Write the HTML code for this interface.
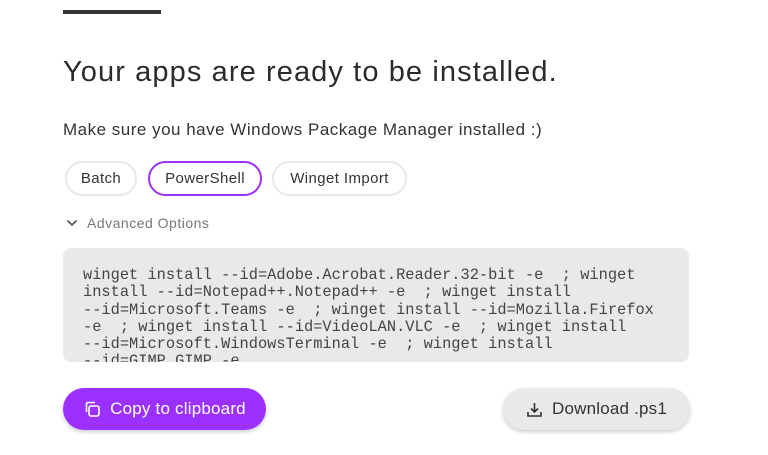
<!DOCTYPE html>
<html><head><meta charset="utf-8"><style>
*{margin:0;padding:0;box-sizing:border-box}
body{width:768px;height:455px;background:#fff;font-family:"Liberation Sans",sans-serif;color:#333;position:relative;overflow:hidden}
.bar{position:absolute;left:63px;top:10px;width:98px;height:4px;background:#333}
h1{position:absolute;left:63px;top:56px;font-size:29px;font-weight:normal;white-space:nowrap;color:#2b2b2b;letter-spacing:1.1px}
.sub{position:absolute;left:63px;top:120px;font-size:17px;white-space:nowrap;color:#333;letter-spacing:0.5px}
.pill{position:absolute;top:161px;height:35px;border:2px solid #e8e8ec;border-radius:18px;font-size:15px;letter-spacing:0.4px;display:flex;align-items:center;justify-content:center;color:#333}
.pill.on{border-color:#9b30ff}
.adv{position:absolute;left:66px;top:215px;font-size:14px;letter-spacing:0.5px;color:#777;display:flex;align-items:center;gap:9px}
.code{position:absolute;left:63px;top:248px;width:626px;height:114px;background:#e9e9ec;border-radius:8px;overflow:hidden}
.code pre{position:absolute;left:20px;top:19px;font-family:"Liberation Mono",monospace;font-size:15.35px;line-height:17.3px;color:#444}
.btn{position:absolute;top:388px;height:42px;border-radius:21px;display:flex;align-items:center;justify-content:center;gap:9px;font-size:17px;letter-spacing:0.2px}
.copy{left:63px;width:203px;background:#9b30ff;color:#fff;box-shadow:0 2px 4px rgba(0,0,0,.2)}
.dl{left:503px;width:187px;background:#e9e9ec;color:#333;box-shadow:0 2px 4px rgba(0,0,0,.2)}
</style></head><body>
<div class="bar"></div>
<h1>Your apps are ready to be installed.</h1>
<div class="sub">Make sure you have Windows Package Manager installed :)</div>
<div class="pill" style="left:65px;width:72px">Batch</div>
<div class="pill on" style="left:148px;width:114px">PowerShell</div>
<div class="pill" style="left:272px;width:135px">Winget Import</div>
<div class="adv"><svg width="12" height="8" viewBox="0 0 12 8"><path d="M1.5 1.5L6 6l4.5-4.5" fill="none" stroke="#555" stroke-width="1.6"/></svg>Advanced Options</div>
<div class="code"><pre>winget install --id=Adobe.Acrobat.Reader.32-bit -e  ; winget
install --id=Notepad++.Notepad++ -e  ; winget install
--id=Microsoft.Teams -e  ; winget install --id=Mozilla.Firefox
-e  ; winget install --id=VideoLAN.VLC -e  ; winget install
--id=Microsoft.WindowsTerminal -e  ; winget install
--id=GIMP.GIMP -e</pre></div>
<div class="btn copy"><svg width="18" height="18" viewBox="0 0 18 18" fill="none" stroke="#fff" stroke-width="1.6"><rect x="6" y="6" width="10" height="10" rx="2"/><path d="M3.5 12V4a1.5 1.5 0 0 1 1.5-1.5h7"/></svg>Copy to clipboard</div>
<div class="btn dl"><svg width="17" height="17" viewBox="0 0 17 17" fill="none" stroke="#333" stroke-width="1.6"><path d="M8.5 2v9M5 7.5l3.5 3.5L12 7.5M2 11v4h13v-4"/></svg>Download .ps1</div>
</body></html>
